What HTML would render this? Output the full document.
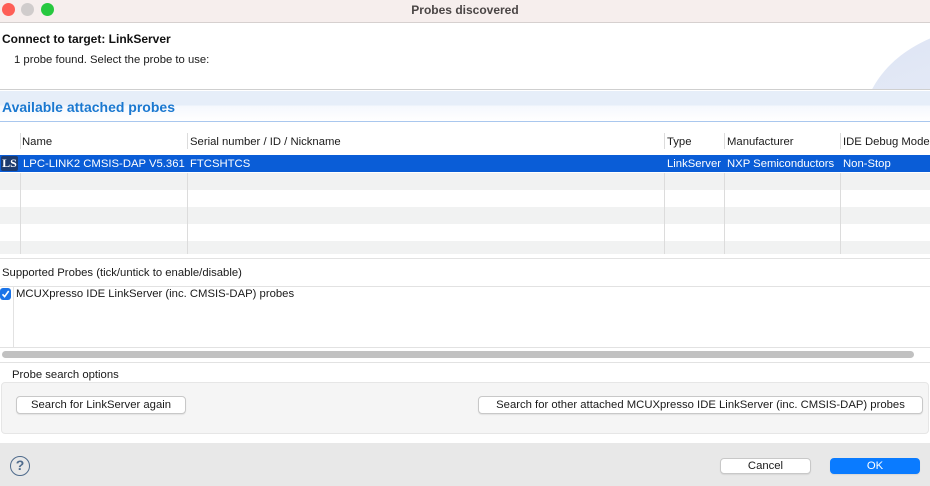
<!DOCTYPE html>
<html><head><meta charset="utf-8"><style>
*{margin:0;padding:0;box-sizing:border-box}
body{width:930px;height:486px;overflow:hidden;background:#fff;font-family:"Liberation Sans",sans-serif;font-size:11.3px;color:#1a1a1a;position:relative}
.a{position:absolute;white-space:nowrap}
.dot{position:absolute;top:3px;width:13px;height:13px;border-radius:50%}
.btn{position:absolute;background:#fff;border:1px solid #c8c8c8;border-radius:4px;text-align:center;font-size:11.3px;line-height:16px;box-shadow:0 1px 1px rgba(0,0,0,.08)}
.row{position:absolute;left:0;width:930px;height:17px}
.vl{position:absolute;width:1px;background:#dcdcdc}
</style></head><body>
<div class="a" style="left:0;top:0;width:930px;height:23px;background:#f6eeed;border-bottom:1px solid #d6d0cf"></div>
<div class="dot" style="left:2px;background:#fe5f57"></div>
<div class="dot" style="left:21px;background:#d0cccc"></div>
<div class="dot" style="left:41px;background:#27c83f"></div>
<div class="a" style="left:0;width:930px;top:3px;text-align:center;font-weight:bold;font-size:12px;color:#4a4545">Probes discovered</div>

<div class="a" style="left:760px;top:24px;width:170px;height:65px;overflow:hidden"><div style="position:absolute;left:103px;top:2px;width:260px;height:200px;border-radius:50%;background:linear-gradient(160deg,#dde4f4,#f1f4fa)"></div></div>
<div class="a" style="left:2px;top:32px;font-weight:bold;font-size:12px;color:#111">Connect to target: LinkServer</div>
<div class="a" style="left:14px;top:54px">1 probe found. Select the probe to use:</div>
<div class="a" style="left:0;top:89px;width:930px;height:1px;background:#cfcfcf"></div>
<div class="a" style="left:0;top:91px;width:930px;height:31px;background:linear-gradient(#e6eef9 0,#e6eef9 14px,#f5f8fd 15px,#fff 30px)"></div>
<div class="a" style="left:0;top:121px;width:930px;height:1px;background:#a9c7ee"></div>
<div class="a" style="left:2px;top:99px;font-weight:bold;font-size:14px;color:#1a78d0">Available attached probes</div>

<div class="a" style="left:22px;top:136px">Name</div>
<div class="a" style="left:190px;top:136px">Serial number / ID / Nickname</div>
<div class="a" style="left:667px;top:136px">Type</div>
<div class="a" style="left:727px;top:136px">Manufacturer</div>
<div class="a" style="left:843px;top:136px">IDE Debug Mode</div>
<div class="vl" style="left:20px;top:133px;height:16px"></div>
<div class="vl" style="left:187px;top:133px;height:16px"></div>
<div class="vl" style="left:664px;top:133px;height:16px"></div>
<div class="vl" style="left:724px;top:133px;height:16px"></div>
<div class="vl" style="left:840px;top:133px;height:16px"></div>

<div class="row" style="top:155px;background:#0a5dd7"></div>
<div class="row" style="top:173px;background:#f1f2f2"></div>
<div class="row" style="top:207px;background:#f1f2f2"></div>
<div class="row" style="top:241px;background:#f1f2f2;height:13px"></div>
<div class="vl" style="left:20px;top:173px;height:81px"></div>
<div class="vl" style="left:187px;top:173px;height:81px"></div>
<div class="vl" style="left:664px;top:173px;height:81px"></div>
<div class="vl" style="left:724px;top:173px;height:81px"></div>
<div class="vl" style="left:840px;top:173px;height:81px"></div>
<div class="a" style="left:1px;top:156px;width:17px;height:15px;background:#1d3b6e;border-radius:2px;color:#fff;font-family:'Liberation Serif',serif;font-weight:bold;font-size:12px;line-height:15px;text-align:center">LS</div>
<div class="a" style="left:23px;top:158px;color:#fff">LPC-LINK2 CMSIS-DAP V5.361</div>
<div class="a" style="left:190px;top:158px;color:#fff">FTCSHTCS</div>
<div class="a" style="left:667px;top:158px;color:#fff">LinkServer</div>
<div class="a" style="left:727px;top:158px;color:#fff">NXP Semiconductors</div>
<div class="a" style="left:843px;top:158px;color:#fff">Non-Stop</div>

<div class="a" style="left:0;top:258px;width:930px;height:1px;background:#e2e2e2"></div>
<div class="a" style="left:2px;top:267px">Supported Probes (tick/untick to enable/disable)</div>
<div class="a" style="left:0;top:286px;width:930px;height:1px;background:#e2e2e2"></div>
<div class="a" style="left:13px;top:287px;width:1px;height:60px;background:#e2e2e2"></div>
<div class="a" style="left:0;top:288px;width:11px;height:12px;background:#1a73e8;border-radius:3px"><svg width="11" height="12" viewBox="0 0 11 12"><path d="M2.5 6.3 L4.6 8.6 L8.7 3" stroke="#fff" stroke-width="1.6" fill="none"/></svg></div>
<div class="a" style="left:16px;top:288px">MCUXpresso IDE LinkServer (inc. CMSIS-DAP) probes</div>
<div class="a" style="left:0;top:347px;width:930px;height:1px;background:#e2e2e2"></div>
<div class="a" style="left:2px;top:351px;width:912px;height:7px;border-radius:4px;background:#c1c1c1"></div>
<div class="a" style="left:0;top:362px;width:930px;height:1px;background:#e2e2e2"></div>
<div class="a" style="left:12px;top:369px">Probe search options</div>
<div class="a" style="left:1px;top:382px;width:928px;height:52px;background:#f5f5f5;border:1px solid #e6e6e6;border-radius:4px"></div>
<div class="btn" style="left:16px;top:396px;width:170px;height:18px">Search for LinkServer again</div>
<div class="btn" style="left:478px;top:396px;width:445px;height:18px">Search for other attached MCUXpresso IDE LinkServer (inc. CMSIS-DAP) probes</div>

<div class="a" style="left:0;top:443px;width:930px;height:43px;background:#e8e8e8"></div>
<div class="a" style="left:10px;top:456px;width:20px;height:20px;border:1.5px solid #4f6b8c;border-radius:50%;color:#4f6b8c;font-weight:bold;font-size:14px;text-align:center;line-height:17px">?</div>
<div class="btn" style="left:720px;top:458px;width:91px;height:16px;line-height:14px">Cancel</div>
<div class="btn" style="left:830px;top:458px;width:90px;height:16px;line-height:14px;background:#0a7bff;border-color:#0a7bff;color:#fff">OK</div>
</body></html>
